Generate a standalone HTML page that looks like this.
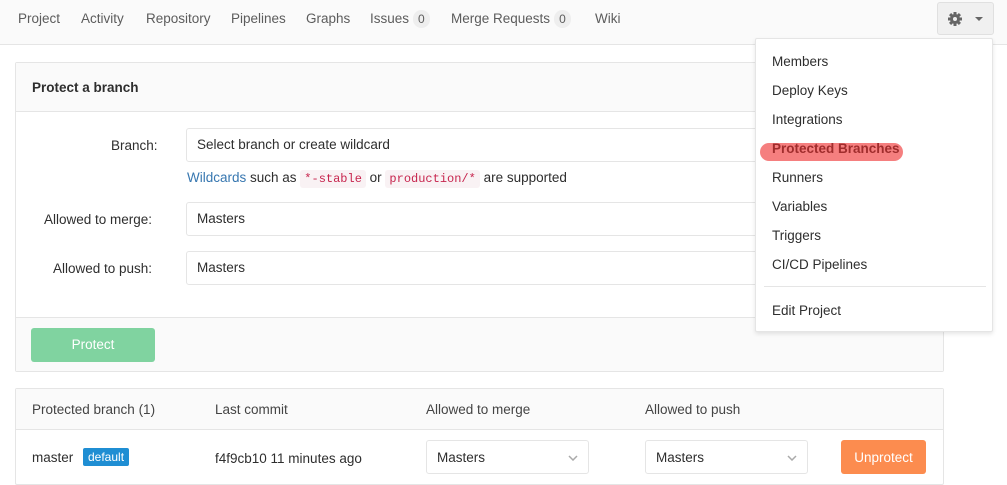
<!DOCTYPE html><html><head><style>
*{box-sizing:border-box;margin:0;padding:0}
body{width:1007px;height:485px;overflow:hidden;background:#fff;font-family:"Liberation Sans",sans-serif;font-size:13.5px;color:#2e2e2e;position:relative}
.a{position:absolute}
.nav{left:0;top:0;width:1007px;height:45px;background:#fafafa;border-bottom:1px solid #e5e5e5}
.nav span{position:absolute;top:11px;color:#5c5c5c}
.badge{display:inline-block;background:#eee;border-radius:9px;padding:0 5px;font-size:12px;color:#777;margin-left:4px;line-height:18px}
.inp{border:1px solid #e5e5e5;border-radius:3px;background:#fff;padding:8px 10px;height:34px}
.code{background:#f9f2f4;color:#c7254e;font-family:"Liberation Mono",monospace;font-size:12px;padding:2px 4px;border-radius:3px}
.dd span{position:absolute;left:16px;color:#2e2e2e}
</style></head><body>
<div class="a nav">
<span style="left:18px">Project</span><span style="left:81px">Activity</span><span style="left:146px">Repository</span><span style="left:231px">Pipelines</span><span style="left:306px">Graphs</span><span style="left:370px;top:10px">Issues<span class="badge" style="position:static">0</span></span><span style="left:451px;top:10px">Merge Requests<span class="badge" style="position:static">0</span></span><span style="left:595px">Wiki</span>
</div>
<div class="a" style="left:937px;top:2px;width:57px;height:33px;background:#f0f0f0;border:1px solid #e0e0e0;border-radius:3px">
<svg class="a" style="left:9px;top:8px" width="16" height="16" viewBox="0 0 16 16"><g fill="#666"><circle cx="8" cy="8" r="5"/><rect x="6.5" y="1" width="3" height="14"/><rect x="1" y="6.5" width="14" height="3"/><rect x="6.5" y="1" width="3" height="14" transform="rotate(45 8 8)"/><rect x="6.5" y="1" width="3" height="14" transform="rotate(-45 8 8)"/></g><circle cx="8" cy="8" r="2" fill="#f0f0f0"/></svg>
<div class="a" style="left:37px;top:14px;border-left:4px solid transparent;border-right:4px solid transparent;border-top:4px solid #666"></div></div>

<div class="a" style="left:15px;top:62px;width:929px;height:310px;border:1px solid #e5e5e5;border-radius:2px">
<div class="a" style="left:0;top:0;width:927px;height:49px;background:#fafafa;border-bottom:1px solid #e5e5e5"><span class="a" style="left:16px;top:17px;font-weight:600">Protect a branch</span></div>
<span class="a" style="left:95px;top:75px">Branch:</span>
<div class="a inp" style="left:170px;top:65px;width:742px">Select branch or create wildcard</div>
<div class="a" style="left:171px;top:107px"><span style="color:#3777b0">Wildcards</span> such as <span class="code">*-stable</span> or <span class="code">production/*</span> are supported</div>
<span class="a" style="left:28px;top:149px">Allowed to merge:</span>
<div class="a inp" style="left:170px;top:139px;width:742px">Masters</div>
<span class="a" style="left:37px;top:198px">Allowed to push:</span>
<div class="a inp" style="left:170px;top:188px;width:742px">Masters</div>
<div class="a" style="left:0;top:254px;width:927px;height:54px;background:#fafafa;border-top:1px solid #e5e5e5">
<div class="a" style="left:15px;top:10px;width:124px;height:34px;background:#80d3a0;border-radius:3px;color:#fff;text-align:center;line-height:34px">Protect</div></div>
</div>

<div class="a" style="left:15px;top:388px;width:929px;height:97px;border:1px solid #e5e5e5;border-radius:2px">
<div class="a" style="left:0;top:0;width:927px;height:41px;background:#fafafa;border-bottom:1px solid #e5e5e5;color:#444">
<span class="a" style="left:16px;top:13px">Protected branch (1)</span><span class="a" style="left:199px;top:13px">Last commit</span><span class="a" style="left:410px;top:13px">Allowed to merge</span><span class="a" style="left:629px;top:13px">Allowed to push</span></div>
<span class="a" style="left:16px;top:61px">master</span>
<span class="a" style="left:67px;top:59px;background:#1f8ed3;color:#fff;font-size:12px;padding:2px 5px;border-radius:2px">default</span>
<span class="a" style="left:199px;top:62px">f4f9cb10 11 minutes ago</span>
<div class="a inp" style="left:410px;top:51px;width:163px;padding-top:9px">Masters<svg class="a" style="right:10px;top:14px" width="10" height="6" viewBox="0 0 10 6"><path d="M1 1l4 4 4-4" fill="none" stroke="#aaa" stroke-width="1.5"/></svg></div>
<div class="a inp" style="left:629px;top:51px;width:163px;padding-top:9px">Masters<svg class="a" style="right:10px;top:14px" width="10" height="6" viewBox="0 0 10 6"><path d="M1 1l4 4 4-4" fill="none" stroke="#aaa" stroke-width="1.5"/></svg></div>
<div class="a" style="left:825px;top:51px;width:85px;height:34px;background:#fc8c4f;border-radius:3px;color:#fff;text-align:center;line-height:35px">Unprotect</div>
</div>

<div class="a dd" style="left:755px;top:38px;width:238px;height:294px;background:#fff;border:1px solid #e5e5e5;border-radius:2px;box-shadow:0 2px 4px rgba(0,0,0,.1)">
<span style="top:15px">Members</span><span style="top:44px">Deploy Keys</span><span style="top:73px">Integrations</span>
<div class="a" style="left:4px;top:104px;width:143px;height:18px;background:#f57f7f;border-radius:9px"></div>
<span style="top:102px;font-weight:bold;color:#a02d2d">Protected Branches</span>
<span style="top:131px">Runners</span><span style="top:160px">Variables</span><span style="top:189px">Triggers</span><span style="top:218px">CI/CD Pipelines</span>
<div class="a" style="left:8px;top:247px;width:222px;height:1px;background:#e5e5e5"></div>
<span style="top:264px">Edit Project</span>
</div>
</body></html>
